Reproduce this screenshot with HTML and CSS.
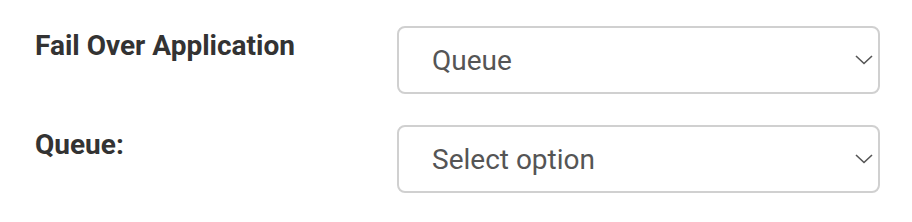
FILE: index.html
```html
<!DOCTYPE html>
<html lang="en">
<head>
    <meta charset="UTF-8">
    <meta name="viewport" content="width=device-width, initial-scale=1.0">
    <title>Fail Over</title>
    <link rel="stylesheet" href="styles.css">
</head>
<body>
    <div class="form">
        <div class="row">
            <label class="label">Fail Over Application</label>
            <div class="select">
                <span class="value">Queue</span>
                <svg class="chevron" width="18" height="10" viewBox="0 0 18 10">
                    <polyline points="1,1 9,8.5 17,1" fill="none" stroke="#555" stroke-width="1.6"/>
                </svg>
            </div>
        </div>
        <div class="row">
            <label class="label">Queue:</label>
            <div class="select">
                <span class="value">Select option</span>
                <svg class="chevron" width="18" height="10" viewBox="0 0 18 10">
                    <polyline points="1,1 9,8.5 17,1" fill="none" stroke="#555" stroke-width="1.6"/>
                </svg>
            </div>
        </div>
    </div>
</body>
</html>
```

FILE: styles.css
```css
body {
    margin: 0;
    background: #fff;
    font-family: Roboto, "Liberation Sans", sans-serif;
}
.form {
    display: flex;
    flex-direction: column;
    gap: 31px;
    padding: 26px 0 0 35px;
}
.row {
    display: grid;
    grid-template-columns: 362px 483px;
    align-items: start;
}
.label {
    padding-top: 4px;
    font-size: 28px;
    line-height: 32px;
    font-weight: 700;
    color: #333;
}
.select {
    box-sizing: border-box;
    height: 68px;
    display: flex;
    align-items: center;
    justify-content: space-between;
    padding: 2px 5px 0 33px;
    border: 2px solid #d0d0d0;
    border-radius: 8px;
    background: #fff;
}
.value {
    font-size: 28px;
    line-height: 32px;
    color: #555;
}
.chevron {
    margin-top: -2px;
}
```
